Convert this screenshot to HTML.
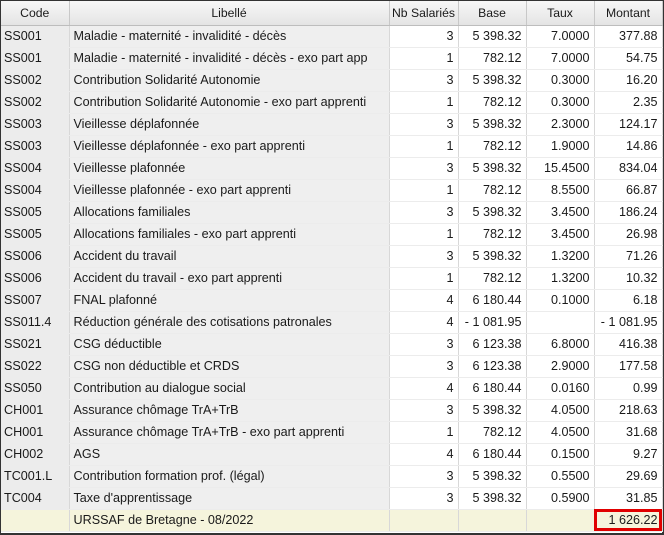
<!DOCTYPE html>
<html><head><meta charset="utf-8"><style>
html,body{margin:0;padding:0;background:#fff;}
body{width:664px;height:535px;overflow:hidden;position:relative;font-family:"Liberation Sans","DejaVu Sans",sans-serif;font-size:12.6px;color:#1a1a1a;}
.wrap{position:absolute;left:0;top:0;border:1px solid #333;border-right:2px solid #333;border-bottom:2px solid #333;box-sizing:border-box;width:664px;height:535px;}
table{border-collapse:collapse;table-layout:fixed;width:661px;}
td,th{height:22px;padding:0 4px;white-space:nowrap;overflow:hidden;border-right:1px solid #d8d8d8;border-bottom:1px solid #ececec;box-sizing:border-box;}
th{height:24px;padding:0;font-weight:normal;font-size:12.2px;background:linear-gradient(#f7f7f7,#e4e4e4);border-right:1px solid #c8c8c8;border-bottom:1px solid #bdbdbd;text-align:center;}
td.c{background:#ececec;padding-left:3px;}
td.l{background:#efefef;padding-left:4px;}
td.n{text-align:right;background:#fff;}
tr.f td{background:#f5f4dc;}
.red{outline:3px solid #e00000;outline-offset:-3px;}
</style></head><body><div class="wrap">
<table>
<colgroup><col style="width:68px"><col style="width:320px"><col style="width:69px"><col style="width:68px"><col style="width:68px"><col style="width:68px"></colgroup>
<tr><th>Code</th><th>Libellé</th><th>Nb Salariés</th><th>Base</th><th>Taux</th><th>Montant</th></tr>
<tr><td class="c">SS001</td><td class="l">Maladie - maternité - invalidité - décès</td><td class="n">3</td><td class="n">5 398.32</td><td class="n">7.0000</td><td class="n">377.88</td></tr>
<tr><td class="c">SS001</td><td class="l">Maladie - maternité - invalidité - décès - exo part app</td><td class="n">1</td><td class="n">782.12</td><td class="n">7.0000</td><td class="n">54.75</td></tr>
<tr><td class="c">SS002</td><td class="l">Contribution Solidarité Autonomie</td><td class="n">3</td><td class="n">5 398.32</td><td class="n">0.3000</td><td class="n">16.20</td></tr>
<tr><td class="c">SS002</td><td class="l">Contribution Solidarité Autonomie - exo part apprenti</td><td class="n">1</td><td class="n">782.12</td><td class="n">0.3000</td><td class="n">2.35</td></tr>
<tr><td class="c">SS003</td><td class="l">Vieillesse déplafonnée</td><td class="n">3</td><td class="n">5 398.32</td><td class="n">2.3000</td><td class="n">124.17</td></tr>
<tr><td class="c">SS003</td><td class="l">Vieillesse déplafonnée - exo part apprenti</td><td class="n">1</td><td class="n">782.12</td><td class="n">1.9000</td><td class="n">14.86</td></tr>
<tr><td class="c">SS004</td><td class="l">Vieillesse plafonnée</td><td class="n">3</td><td class="n">5 398.32</td><td class="n">15.4500</td><td class="n">834.04</td></tr>
<tr><td class="c">SS004</td><td class="l">Vieillesse plafonnée - exo part apprenti</td><td class="n">1</td><td class="n">782.12</td><td class="n">8.5500</td><td class="n">66.87</td></tr>
<tr><td class="c">SS005</td><td class="l">Allocations familiales</td><td class="n">3</td><td class="n">5 398.32</td><td class="n">3.4500</td><td class="n">186.24</td></tr>
<tr><td class="c">SS005</td><td class="l">Allocations familiales - exo part apprenti</td><td class="n">1</td><td class="n">782.12</td><td class="n">3.4500</td><td class="n">26.98</td></tr>
<tr><td class="c">SS006</td><td class="l">Accident du travail</td><td class="n">3</td><td class="n">5 398.32</td><td class="n">1.3200</td><td class="n">71.26</td></tr>
<tr><td class="c">SS006</td><td class="l">Accident du travail - exo part apprenti</td><td class="n">1</td><td class="n">782.12</td><td class="n">1.3200</td><td class="n">10.32</td></tr>
<tr><td class="c">SS007</td><td class="l">FNAL plafonné</td><td class="n">4</td><td class="n">6 180.44</td><td class="n">0.1000</td><td class="n">6.18</td></tr>
<tr><td class="c">SS011.4</td><td class="l">Réduction générale des cotisations patronales</td><td class="n">4</td><td class="n">- 1 081.95</td><td class="n"></td><td class="n">- 1 081.95</td></tr>
<tr><td class="c">SS021</td><td class="l">CSG déductible</td><td class="n">3</td><td class="n">6 123.38</td><td class="n">6.8000</td><td class="n">416.38</td></tr>
<tr><td class="c">SS022</td><td class="l">CSG non déductible et CRDS</td><td class="n">3</td><td class="n">6 123.38</td><td class="n">2.9000</td><td class="n">177.58</td></tr>
<tr><td class="c">SS050</td><td class="l">Contribution au dialogue social</td><td class="n">4</td><td class="n">6 180.44</td><td class="n">0.0160</td><td class="n">0.99</td></tr>
<tr><td class="c">CH001</td><td class="l">Assurance chômage TrA+TrB</td><td class="n">3</td><td class="n">5 398.32</td><td class="n">4.0500</td><td class="n">218.63</td></tr>
<tr><td class="c">CH001</td><td class="l">Assurance chômage TrA+TrB - exo part apprenti</td><td class="n">1</td><td class="n">782.12</td><td class="n">4.0500</td><td class="n">31.68</td></tr>
<tr><td class="c">CH002</td><td class="l">AGS</td><td class="n">4</td><td class="n">6 180.44</td><td class="n">0.1500</td><td class="n">9.27</td></tr>
<tr><td class="c">TC001.L</td><td class="l">Contribution formation prof. (légal)</td><td class="n">3</td><td class="n">5 398.32</td><td class="n">0.5500</td><td class="n">29.69</td></tr>
<tr><td class="c">TC004</td><td class="l">Taxe d'apprentissage</td><td class="n">3</td><td class="n">5 398.32</td><td class="n">0.5900</td><td class="n">31.85</td></tr>
<tr class="f"><td class="c"></td><td class="l">URSSAF de Bretagne - 08/2022</td><td class="n"></td><td class="n"></td><td class="n"></td><td class="n red">1 626.22</td></tr>
</table></div></body></html>
